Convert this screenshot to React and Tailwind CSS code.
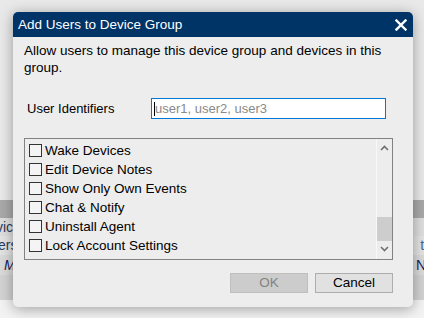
import React from 'react';

const perms = [
  'Wake Devices',
  'Edit Device Notes',
  'Show Only Own Events',
  'Chat & Notify',
  'Uninstall Agent',
  'Lock Account Settings',
];

const App = () => {
  return (
    <div
      className="relative w-[424px] h-[318px] overflow-hidden bg-[#ebebeb] text-[13px] text-black"
      style={{ fontFamily: '"Liberation Sans", Arial, sans-serif' }}
    >
      {/* Page behind the dialog (dimmed) */}
      <div className="flex flex-col">
        <div className="h-[200px] bg-[#e9e9e9]" />
        <div className="h-[18px] bg-[#a9a9a9]" />
        <div className="h-[18px] bg-[#dedede] flex justify-between items-center text-[14px] text-[#2a3a5a]">
          <span className="-ml-[4px]">vic</span>
          <span />
        </div>
        <div className="h-[19px] bg-[#e3e3e3] flex justify-between items-center text-[14px] text-[#2a3a5a]">
          <span className="-ml-[2px]">ers</span>
          <span className="-mr-[4px] text-[#3a6aa0]">t:</span>
        </div>
        <div className="h-[20px] bg-[#dadada] flex justify-between items-center text-[14px] text-[#1a1a5a]">
          <span className="ml-[4px] italic">M</span>
          <span className="-mr-[2px]">, N</span>
        </div>
        <div className="h-[25px] bg-[#d3d3d3]" />
        <div className="h-[18px] bg-[#f3f3f3]" />
      </div>

      {/* Dialog */}
      <div className="absolute left-[13px] top-[12px] w-[400px] h-[295px] rounded-[5px] bg-[#ededed] shadow-[0_2px_14px_rgba(0,0,0,0.35)] flex flex-col overflow-hidden">
        <div className="h-[25px] bg-[#003366] flex items-center justify-between pl-[5px] pr-[5px]">
          <span className="text-white text-[13.5px] leading-none">Add Users to Device Group</span>
          <svg width="12" height="12" viewBox="0 0 12 12" className="mr-[1px]">
            <path d="M1.5 1.5 L10.5 10.5 M10.5 1.5 L1.5 10.5" stroke="white" strokeWidth="2.4" strokeLinecap="square" />
          </svg>
        </div>

        <div className="flex flex-col px-[11px] pt-[5px]">
          <p className="leading-[17px] text-[13.5px]">
            Allow users to manage this device group and devices in this group.
          </p>

          <div className="flex items-center mt-[22px] pl-[3px]">
            <span className="w-[124px] text-[13px]">User Identifiers</span>
            <div className="w-[235px] h-[21px] border border-[#0078d7] bg-white flex items-center pl-[2px]">
              <span className="w-px h-[14px] bg-black" />
              <span className="text-[13px] text-[#8a8a8a] leading-none">user1, user2, user3</span>
            </div>
          </div>

          <div className="mt-[19px] w-[369px] h-[122px] border border-[#828282] flex">
            <div className="flex-1 flex flex-col pl-[4px] pt-[5px] gap-[6px]">
              {perms.map((p) => (
                <label key={p} className="flex items-center gap-[3px] h-[13px]">
                  <span className="w-[13px] h-[13px] border border-[#333] bg-[#f4f4f4]" />
                  <span className="leading-none text-[13.5px]">{p}</span>
                </label>
              ))}
            </div>
            <div className="w-[16px] border-l border-[#f8f8f8] bg-[#ededed] flex flex-col items-center">
              <svg width="9" height="6" viewBox="0 0 9 6" className="mt-[6px]">
                <path d="M1 5 L4.5 1.5 L8 5" stroke="#707070" strokeWidth="1.6" fill="none" />
              </svg>
              <div className="mt-[66px] w-[15px] h-[24px] bg-[#cdcdcd]" />
              <svg width="9" height="6" viewBox="0 0 9 6" className="mt-[5px]">
                <path d="M1 1 L4.5 4.5 L8 1" stroke="#707070" strokeWidth="1.6" fill="none" />
              </svg>
            </div>
          </div>

          <div className="flex justify-end gap-[7px] mt-[13px] pr-[9px]">
            <button className="w-[78px] h-[20px] bg-[#cccccc] border border-[#bfbfbf] text-[#838383] text-[13.5px] leading-none">
              OK
            </button>
            <button className="w-[78px] h-[20px] bg-[#e1e1e1] border border-[#adadad] text-black text-[13.5px] leading-none">
              Cancel
            </button>
          </div>
        </div>
      </div>
    </div>
  );
};

export default App;
